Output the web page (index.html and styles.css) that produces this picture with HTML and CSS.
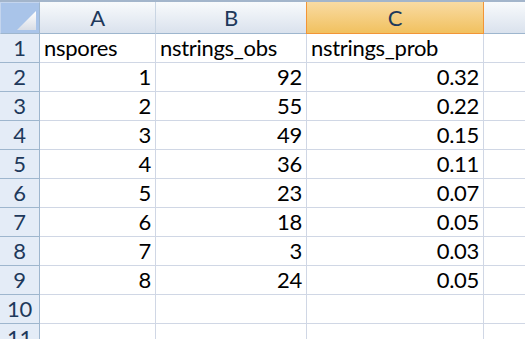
FILE: index.html
```html
<!DOCTYPE html>
<html>
<head>
<meta charset="utf-8">
<link rel="stylesheet" href="styles.css">
</head>
<body>
<div class="sheet">
  <div class="hdr corner"><span class="tri"></span></div>
  <div class="hdr col">A</div>
  <div class="hdr col">B</div>
  <div class="hdr col sel">C</div>
  <div class="hdr col last"></div>

  <div class="rh">1</div><div class="c">nspores</div><div class="c">nstrings_obs</div><div class="c">nstrings_prob</div><div class="c"></div>
  <div class="rh">2</div><div class="c n">1</div><div class="c n">92</div><div class="c n">0.32</div><div class="c"></div>
  <div class="rh">3</div><div class="c n">2</div><div class="c n">55</div><div class="c n">0.22</div><div class="c"></div>
  <div class="rh">4</div><div class="c n">3</div><div class="c n">49</div><div class="c n">0.15</div><div class="c"></div>
  <div class="rh">5</div><div class="c n">4</div><div class="c n">36</div><div class="c n">0.11</div><div class="c"></div>
  <div class="rh">6</div><div class="c n">5</div><div class="c n">23</div><div class="c n">0.07</div><div class="c"></div>
  <div class="rh">7</div><div class="c n">6</div><div class="c n">18</div><div class="c n">0.05</div><div class="c"></div>
  <div class="rh">8</div><div class="c n">7</div><div class="c n">3</div><div class="c n">0.03</div><div class="c"></div>
  <div class="rh">9</div><div class="c n">8</div><div class="c n">24</div><div class="c n">0.05</div><div class="c"></div>
  <div class="rh">10</div><div class="c"></div><div class="c"></div><div class="c"></div><div class="c"></div>
  <div class="rh">11</div><div class="c"></div><div class="c"></div><div class="c"></div><div class="c"></div>
</div>
</body>
</html>
```
FILE: styles.css
```css
html, body {
  margin: 0;
  padding: 0;
  background: #fff;
  overflow: hidden;
}
.sheet {
  display: grid;
  grid-template-columns: 40px 116px 151px 177px 60px;
  grid-template-rows: 32px repeat(11, 29px);
  font-family: Lato, "Open Sans", sans-serif;
  font-size: 22px;
  letter-spacing: -0.3px;
  color: #000;
  border-top: 2px solid #a3b5cb;
}
.sheet > div {
  box-sizing: border-box;
  border-right: 1px solid #d0d7e5;
  border-bottom: 1px solid #d0d7e5;
  display: flex;
  align-items: flex-end;
  padding: 0 4px 3px 4px;
  line-height: 1;
  white-space: nowrap;
}
.sheet > .hdr {
  background: linear-gradient(#f8fafc, #dae2ed);
  border-right: 1px solid #c9d5e3;
  border-bottom: 1px solid #9eb6ce;
  justify-content: center;
  align-items: center;
  padding: 0;
  color: #1e395b;
}
.sheet > .corner {
  position: relative;
  background: #a9c4e9;
  border: 1px solid #c4d5ee;
  border-right: 1px solid #9eb6ce;
  border-bottom: 1px solid #9eb6ce;
}
.tri {
  position: absolute;
  right: 3px;
  bottom: 3px;
  width: 19px;
  height: 19px;
  background: linear-gradient(#ffffff, #d8dde6);
  clip-path: polygon(100% 0, 100% 100%, 0 100%);
}
.sheet > .sel {
  background: linear-gradient(#f9dba3, #f1c15f);
  border-right: 1px solid #f29536;
  border-bottom: 1px solid #f29536;
  border-left: 1px solid #f29536;
  margin-left: -1px;
}
.sheet > .rh {
  background: #e4ecf7;
  border-right: 1px solid #9eb6ce;
  border-bottom: 1px solid #9eb6ce;
  justify-content: center;
  align-items: center;
  padding: 0;
  color: #1e395b;
}
.sheet > .n {
  justify-content: flex-end;
}
```
